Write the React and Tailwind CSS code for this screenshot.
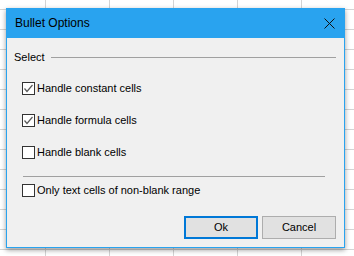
const font = { fontFamily: '"Liberation Sans", Arial, sans-serif' };

function CheckBox({ checked, label }) {
    return (
        <div className="flex h-[16px] items-center">
            <span className="flex h-[13px] w-[13px] items-center justify-center border border-[#333333] bg-white">
                {checked && (
                    <svg width="11" height="11" viewBox="0 0 11 11">
                        <path d="M1.5 5.5 L4 8.5 L9.5 2" fill="none" stroke="#5a5a5a" strokeWidth="1.2" />
                    </svg>
                )}
            </span>
            <span className="ml-[2px] text-[11px] leading-none text-black">{label}</span>
        </div>
    );
}

export default function App() {
    return (
        <div
            className="h-[256px] w-[354px] overflow-hidden bg-white bg-[linear-gradient(#d4d4d4_1px,transparent_1px),linear-gradient(90deg,#d4d4d4_1px,transparent_1px)] bg-[size:64px_20px] bg-[position:45px_9px] pl-[6px] pt-[8px]"
            style={font}
        >
            <div className="flex h-[240px] w-[339px] flex-col shadow-[0_2px_5px_rgba(0,0,0,0.4)]">
                {/* Barra de título */}
                <div className="flex h-[30px] items-center justify-between bg-[#29a3ef] pl-[9px] pr-[10px]">
                    <span className="text-[12px] leading-none text-black">Bullet Options</span>
                    <svg width="11" height="11" viewBox="0 0 11 11">
                        <path d="M0.5 0.5 L10.5 10.5 M10.5 0.5 L0.5 10.5" stroke="#111" strokeWidth="1" />
                    </svg>
                </div>

                {/* Cuerpo */}
                <div className="flex flex-1 flex-col border-x border-b border-[#29a3ef] bg-[#f0f0f0]">
                    <div className="mt-[12px] flex h-[14px] items-center pl-[7px] pr-[8px]">
                        <span className="text-[11px] leading-none text-black">Select</span>
                        <div className="ml-[6px] h-px flex-1 bg-[#a0a0a0]" />
                    </div>

                    <div className="mt-[16px] flex flex-col gap-[16px] pl-[15px]">
                        <CheckBox checked label="Handle constant cells" />
                        <CheckBox checked label="Handle formula cells" />
                        <CheckBox label="Handle blank cells" />
                    </div>

                    <div className="ml-[16px] mr-[19px] mt-[16px] h-px bg-[#a0a0a0]" />

                    <div className="mt-[5px] pl-[15px]">
                        <CheckBox label="Only text cells of non-blank range" />
                    </div>

                    <div className="mt-[18px] flex justify-end gap-[4px] pr-[8px]">
                        <button className="h-[23px] w-[74px] border-2 border-[#0078d7] bg-[#e1e1e1] text-[11px] text-black">
                            Ok
                        </button>
                        <button className="h-[23px] w-[74px] border border-[#adadad] bg-[#e1e1e1] text-[11px] text-black">
                            Cancel
                        </button>
                    </div>
                </div>
            </div>
        </div>
    );
}
